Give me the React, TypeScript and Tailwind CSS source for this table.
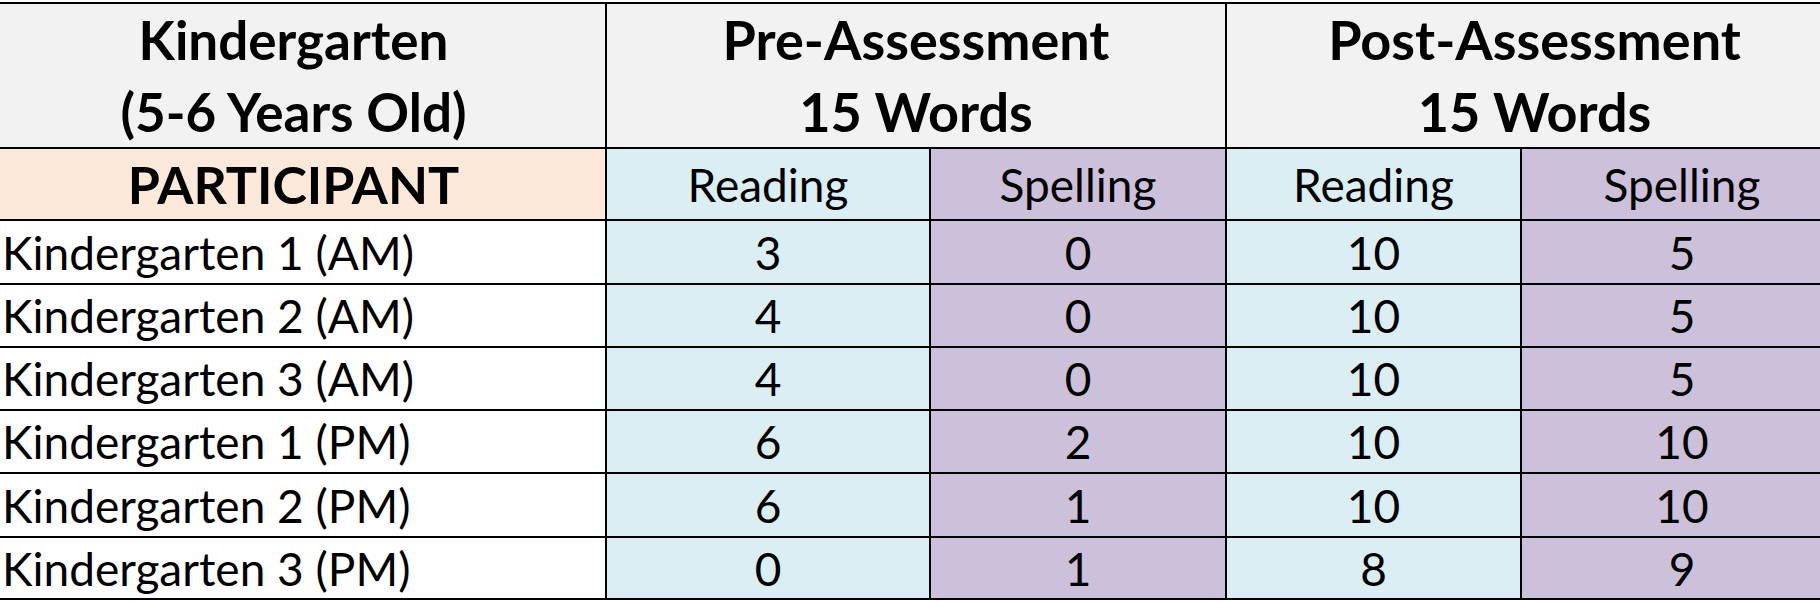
import React from "react";

const rows: [string, string, string, string, string][] = [
  ["Kindergarten 1 (AM)", "3", "0", "10", "5"],
  ["Kindergarten 2 (AM)", "4", "0", "10", "5"],
  ["Kindergarten 3 (AM)", "4", "0", "10", "5"],
  ["Kindergarten 1 (PM)", "6", "2", "10", "10"],
  ["Kindergarten 2 (PM)", "6", "1", "10", "10"],
  ["Kindergarten 3 (PM)", "0", "1", "8", "9"],
];

export default function App() {
  return (
    <div
      className="w-full h-[602px] overflow-hidden bg-white pt-[2px] text-black"
      style={{ fontFamily: 'Lato, "Open Sans", sans-serif' }}
    >
      <div className="grid grid-cols-[605px_322px_294px_293px_1fr] grid-rows-[143px_70px_62px_61px_61px_61px_62px_60px] gap-[2px] bg-black py-[2px]">
        <div className="flex flex-col items-center justify-center bg-[#f2f2f2] pr-[18px] text-[53px] font-bold leading-[72px]">
          <span>Kindergarten</span>
          <span>(5-6 Years Old)</span>
        </div>
        <div className="col-span-2 flex flex-col items-center justify-center bg-[#f2f2f2] text-[54px] font-bold leading-[72px]">
          <span>Pre-Assessment</span>
          <span>15 Words</span>
        </div>
        <div className="col-span-2 flex flex-col items-center justify-center bg-[#f2f2f2] pl-[22px] text-[54px] font-bold leading-[72px]">
          <span>Post-Assessment</span>
          <span>15 Words</span>
        </div>

        <div className="flex items-center justify-center bg-[#fde9d9] pr-[18px] text-[52px] font-bold">
          PARTICIPANT
        </div>
        <div className="flex items-center justify-center bg-[#daeef3] text-[46px]">Reading</div>
        <div className="flex items-center justify-center bg-[#ccc0da] text-[46px]">Spelling</div>
        <div className="flex items-center justify-center bg-[#daeef3] text-[46px]">Reading</div>
        <div className="flex items-center justify-center bg-[#ccc0da] pl-[22px] text-[46px]">Spelling</div>

        {rows.map((r) => (
          <React.Fragment key={r[0]}>
            <div className="flex items-center bg-white pl-[2px] text-[46px] whitespace-nowrap">{r[0]}</div>
            <div className="flex items-center justify-center bg-[#daeef3] text-[46px]">{r[1]}</div>
            <div className="flex items-center justify-center bg-[#ccc0da] text-[46px]">{r[2]}</div>
            <div className="flex items-center justify-center bg-[#daeef3] text-[46px]">{r[3]}</div>
            <div className="flex items-center justify-center bg-[#ccc0da] pl-[22px] text-[46px]">{r[4]}</div>
          </React.Fragment>
        ))}
      </div>
    </div>
  );
}
